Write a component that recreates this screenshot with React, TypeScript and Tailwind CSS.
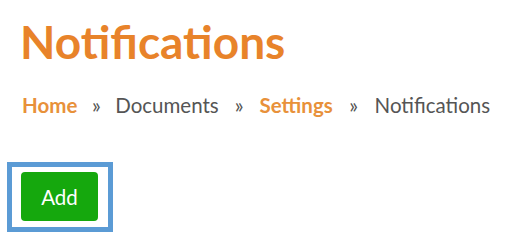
export default function App() {
  return (
    <div className="w-[519px] h-[240px] bg-white pl-[20px] pt-[14px]" style={{ fontFamily: "Lato, 'Noto Sans', sans-serif" }}>
      <h1 className="text-[46px] leading-[56px] font-bold text-[#e8832a]">Notifications</h1>
      <nav className="mt-[23px] flex items-center text-[20.5px] leading-[24px] text-[#555555] pl-[2px]">
        <span className="font-bold text-[#e8913a]">Home</span>
        <span className="px-[14.5px]">»</span>
        <span>Documents</span>
        <span className="px-[16px]">»</span>
        <span className="font-bold text-[#e8913a]">Settings</span>
        <span className="px-[16.5px]">»</span>
        <span>Notifications</span>
      </nav>
      <div className="mt-[45px] -ml-[13px] flex w-fit border-[5px] border-[#5b9bd5] pl-[9px] pr-[10px] pt-[5px] pb-[6px]">
        <button className="w-[77px] h-[49px] rounded-[4px] bg-[#15a80d] text-white text-[20.5px] leading-[24px]">Add</button>
      </div>
    </div>
  );
}
